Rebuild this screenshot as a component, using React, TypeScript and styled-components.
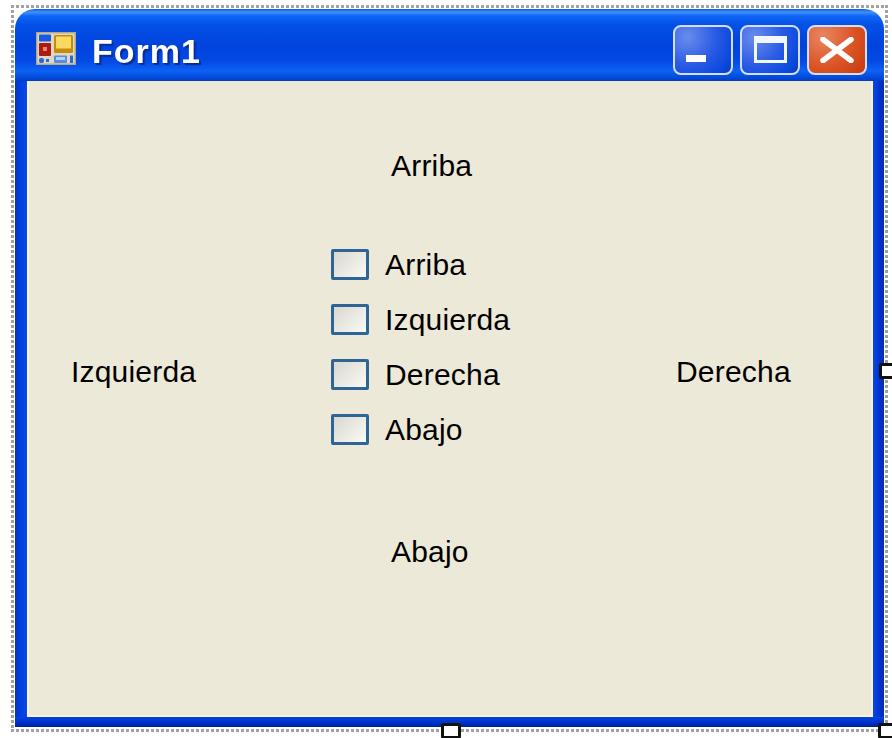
import * as React from 'react';
import styled, { createGlobalStyle } from 'styled-components';

const GlobalStyle = createGlobalStyle`
  html, body {
    margin: 0;
    padding: 0;
    background: #fff;
  }
  body {
    width: 892px;
    height: 738px;
    overflow: hidden;
    font-family: "Liberation Sans", Arial, sans-serif;
  }
`;

const Selection = styled.div`
  position: relative;
  box-sizing: border-box;
  width: 877px;
  height: 727px;
  margin: 5px 0 0 11px;
  padding: 4px 4px 5px 4px;
  background:
    repeating-linear-gradient(90deg, #a2a2a2 0 3px, transparent 3px 5px) top / 100% 3px no-repeat,
    repeating-linear-gradient(90deg, #a2a2a2 0 3px, transparent 3px 5px) bottom / 100% 3px no-repeat,
    repeating-linear-gradient(180deg, #a2a2a2 0 3px, transparent 3px 5px) left / 3px 100% no-repeat,
    repeating-linear-gradient(180deg, #a2a2a2 0 3px, transparent 3px 5px) right / 3px 100% no-repeat;
  filter: blur(0.7px);
`;

const Handle = styled.span<{ $x: number; $y: number }>`
  position: absolute;
  left: ${p => p.$x}px;
  top: ${p => p.$y}px;
  width: 14px;
  height: 10px;
  background: #fff;
  border: 3px solid #111;
  border-radius: 2px;
`;

const Window = styled.div`
  display: flex;
  flex-direction: column;
  height: 100%;
  border-radius: 20px 20px 0 0;
  overflow: hidden;
`;

const TitleBar = styled.div`
  display: flex;
  align-items: center;
  flex: 0 0 72px;
  box-sizing: border-box;
  padding: 10px 17px 0 21px;
  background: linear-gradient(
    180deg,
    #0a57e0 0,
    #3d94fb 3px,
    #0f66f6 7px,
    #0450e6 16px,
    #0044dd 36px,
    #0449e4 52px,
    #0c62f4 62px,
    #0450e0 67px,
    #003cc8 72px
  );
`;

const IconSlot = styled.span`
  display: flex;
  margin-top: -4px;
`;

const Title = styled.span`
  flex: 1;
  margin: 2px 0 0 16px;
  color: #fff;
  font-size: 34px;
  font-weight: 700;
  letter-spacing: 1px;
  text-shadow: 2px 2px 1px #0a2c90;
`;

const Controls = styled.div`
  display: flex;
  gap: 7px;
  margin-top: -1px;
`;

const CaptionButton = styled.div<{ $close?: boolean }>`
  display: flex;
  align-items: center;
  justify-content: center;
  box-sizing: border-box;
  width: 60px;
  height: 50px;
  border: 2px solid #d4def8;
  border-radius: 8px;
  background: ${p =>
    p.$close
      ? 'radial-gradient(circle at 25% 20%, #e88660, #dc5426 55%, #c43a0e)'
      : 'radial-gradient(circle at 22% 22%, #6a8cec, #2a5be4 50%, #0b4ae0 80%, #0a3cc0)'};
`;

const MinGlyph = styled.span`
  width: 20px;
  height: 7px;
  margin: 18px 14px 0 0;
  background: #fff;
`;

const MaxGlyph = styled.span`
  box-sizing: border-box;
  width: 33px;
  height: 27px;
  border: 3px solid #f2f6ff;
  border-top-width: 7px;
`;

const FormIcon = () => (
  <svg width="40" height="33" viewBox="0 0 40 33" aria-hidden="true">
    <rect width="40" height="33" fill="#b4aa88" />
    <rect x="1.5" y="1.5" width="37" height="30" fill="#dcd8c4" />
    <rect x="3" y="2.5" width="12" height="7" rx="1" fill="#1a5ae0" />
    <rect x="3" y="11" width="12" height="13" rx="1" fill="#a81c14" />
    <rect x="7" y="15" width="4" height="4" fill="#f08070" />
    <rect x="18" y="3" width="19" height="18" rx="1.5" fill="#c48c08" />
    <rect x="20" y="4.5" width="15" height="12" fill="#fbd860" />
    <rect x="3" y="26" width="5" height="5" rx="2" fill="#2a68d8" />
    <rect x="10" y="27" width="3" height="3" fill="#2a68d8" />
    <rect x="18" y="23.5" width="13" height="7.5" rx="1" fill="#5a8ce0" />
    <rect x="20" y="25" width="9" height="3" fill="#b8d0f4" />
    <rect x="34" y="23.5" width="3" height="7.5" fill="#2a68d8" />
  </svg>
);

const CloseGlyph = () => (
  <svg width="34" height="26" viewBox="0 0 34 26" aria-hidden="true">
    <path d="M3 2.5 L31 23.5 M31 2.5 L3 23.5" stroke="#fff" strokeWidth="5.5" strokeLinecap="round" />
  </svg>
);

// side and bottom edges of the frame are darker towards the outside
const Body = styled.div`
  flex: 1;
  display: flex;
  padding: 0 11px 10px 12px;
  min-height: 0;
  background:
    linear-gradient(0deg, #001f98 0, #0030c4 4px, #0044e6 10px) bottom / 100% 10px no-repeat,
    linear-gradient(90deg, #0a34b8 0, #0040dc 5px, #0848ea 12px) left / 12px 100% no-repeat,
    linear-gradient(270deg, #0a2cb0 0, #0034d0 5px, #0848ea 11px) right / 11px 100% no-repeat;
`;

const Client = styled.div`
  flex: 1;
  display: grid;
  grid-template-columns: 302px 345px 1fr;
  box-sizing: border-box;
  background: #ece9d8;
  border-left: 2px solid #fbf5dc;
  border-bottom: 2px solid #fbf5dc;
  border-right: 2px solid #f8f2da;
  color: #000;
  font-size: 30px;
  letter-spacing: 0.2px;
  line-height: 34px;
`;

const SideColumn = styled.div<{ $left?: boolean }>`
  padding-top: 274px;
  padding-left: ${p => (p.$left ? '42px' : '0')};
`;

const CenterColumn = styled.div`
  display: flex;
  flex-direction: column;
  padding-top: 68px;
`;

const CenterLabel = styled.div`
  margin-left: 60px;
`;

const CheckList = styled.div`
  display: flex;
  flex-direction: column;
  margin: 54px 0 78px;
`;

const CheckRow = styled.label`
  display: flex;
  align-items: center;
  gap: 16px;
  height: 55px;
`;

const CheckBox = styled.span`
  box-sizing: border-box;
  width: 38px;
  height: 31px;
  border: 3px solid #2f6596;
  border-radius: 2px;
  background: linear-gradient(135deg, #d8d8d0, #f0f0ea 70%, #fafaf6);
`;

const options = ['Arriba', 'Izquierda', 'Derecha', 'Abajo'];

export default function App() {
  return (
    <>
      <GlobalStyle />
      <Selection>
        <Window>
          <TitleBar>
            <IconSlot>
              <FormIcon />
            </IconSlot>
            <Title>Form1</Title>
            <Controls>
              <CaptionButton>
                <MinGlyph />
              </CaptionButton>
              <CaptionButton>
                <MaxGlyph />
              </CaptionButton>
              <CaptionButton $close>
                <CloseGlyph />
              </CaptionButton>
            </Controls>
          </TitleBar>
          <Body>
            <Client>
              <SideColumn $left>Izquierda</SideColumn>
              <CenterColumn>
                <CenterLabel>Arriba</CenterLabel>
                <CheckList>
                  {options.map(option => (
                    <CheckRow key={option}>
                      <CheckBox />
                      {option}
                    </CheckRow>
                  ))}
                </CheckList>
                <CenterLabel>Abajo</CenterLabel>
              </CenterColumn>
              <SideColumn>Derecha</SideColumn>
            </Client>
          </Body>
        </Window>
        <Handle $x={868} $y={358} />
        <Handle $x={430} $y={718} />
        <Handle $x={867} $y={718} />
      </Selection>
    </>
  );
}
